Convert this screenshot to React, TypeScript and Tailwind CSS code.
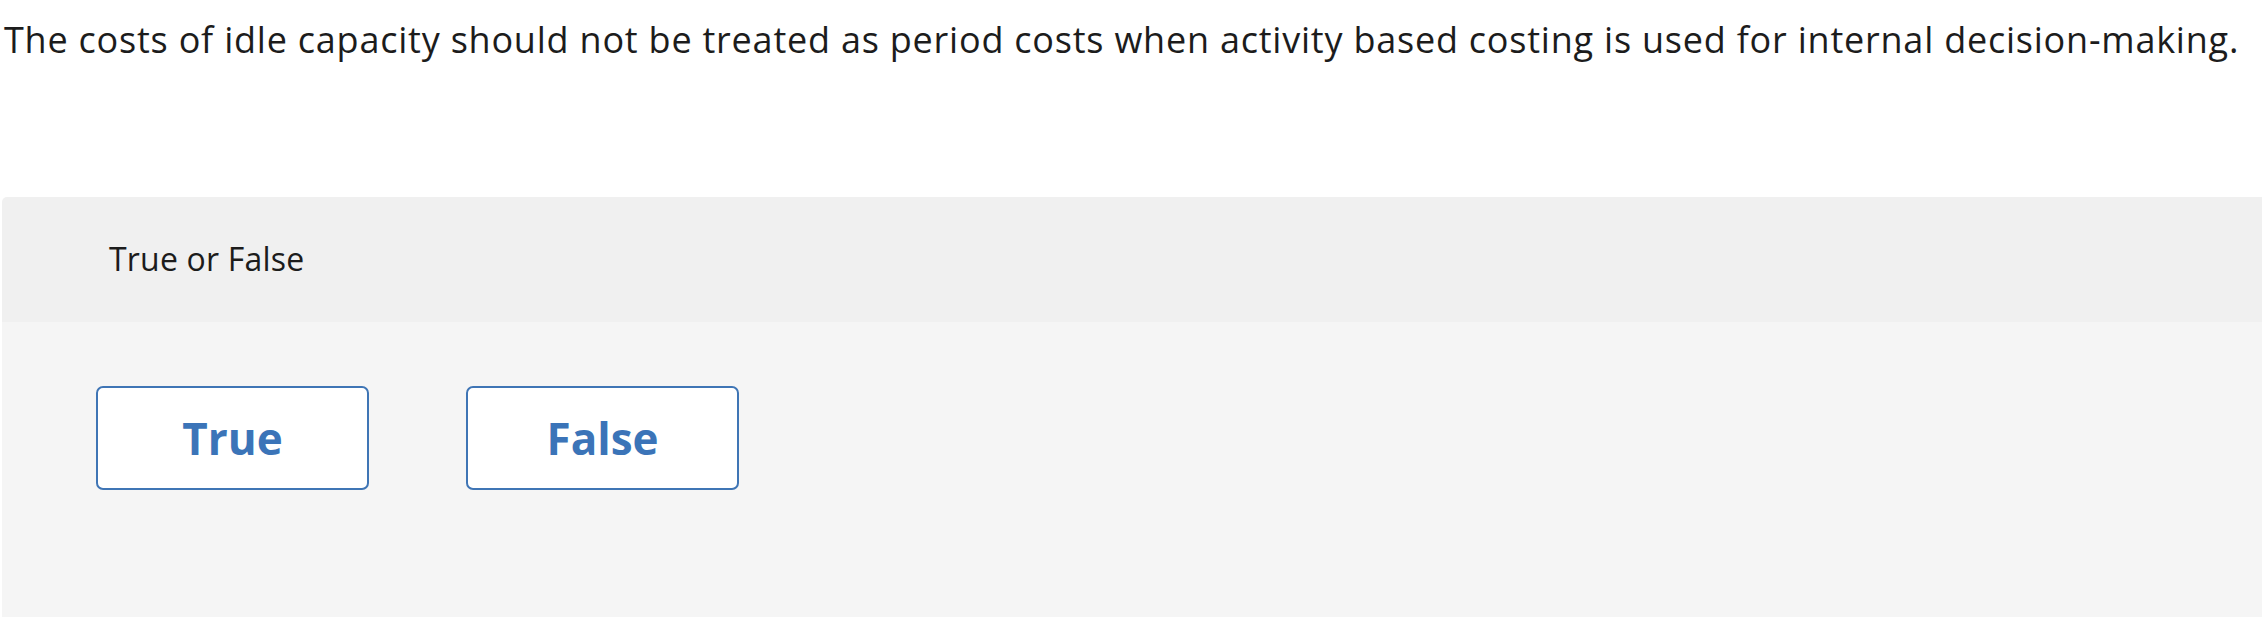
export default function App() {
  const font = { fontFamily: '"Open Sans", "Liberation Sans", sans-serif' };

  return (
    <div className="min-h-[617px] w-full bg-white text-[#1c1c1c]" style={font}>
      <p className="pl-[4px] pt-[16px] text-[36px] leading-[48px] tracking-[0.78px] whitespace-nowrap">
        The costs of idle capacity should not be treated as period costs when activity based costing is used for internal decision-making.
      </p>

      <div className="ml-[2px] mt-[133px] overflow-hidden rounded-tl-[5px]">
        <div className="h-[125px] bg-[#f0f0f0] pl-[107px] pt-[42px]">
          <span className="text-[32px] leading-[40px] tracking-[0.2px]">True or False</span>
        </div>
        <div className="flex h-[295px] gap-[97px] bg-[#f5f5f5] pl-[94px] pt-[64px]">
          {["True", "False"].map((label) => (
            <button
              key={label}
              className="flex h-[104px] w-[273px] items-center justify-center rounded-[7px] border-2 border-[#3f75b5] bg-white text-[44px] font-bold text-[#3b74b8]"
            >
              {label}
            </button>
          ))}
        </div>
      </div>
    </div>
  );
}
